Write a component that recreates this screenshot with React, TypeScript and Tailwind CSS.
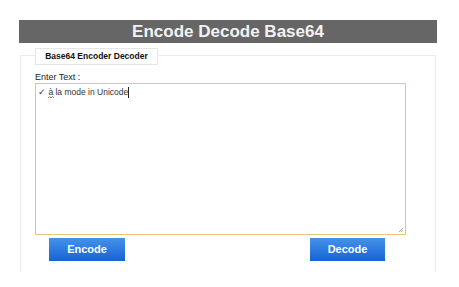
export default function App() {
  return (
    <div className="w-[459px] h-[287px] bg-white font-['Liberation_Sans',Arial,sans-serif] overflow-hidden">
      <div className="pt-[20px] pl-[19px] w-[437px]">
        {/* Title bar */}
        <div className="h-[23px] bg-[#666666] flex items-center justify-center text-[#f2f2f2] text-[17px] font-bold leading-none">
          Encode Decode Base64
        </div>

        {/* Panel */}
        <div className="relative mt-[12px] ml-[1px] w-[416px] h-[217px] border-t border-x border-[#ececec]">
          <div className="absolute left-[14px] top-[-8px] w-[123px] h-[17px] bg-white border border-[#e6e6e6] flex items-center justify-center text-[8.5px] font-bold text-[#111]">
            Base64 Encoder Decoder
          </div>

          <div className="pt-[16px] pl-[14px]">
            <div className="text-[9px] leading-[11px] text-[#222]">Enter Text :</div>
            <div className="w-[371px] h-[152px] border border-[#e7c57c] relative">
              <div className="relative pt-[3px] pl-[2px] text-[8.5px] leading-[11px] text-[#333] flex items-center">
                <span>✓&nbsp;</span>
                <span className="relative">
                  à
                  <svg className="absolute left-0 top-[9px]" width="6" height="3" viewBox="0 0 6 3">
                    <path d="M0 2 L1.5 0.5 L3 2 L4.5 0.5 L6 2" stroke="#e03030" strokeWidth="0.8" fill="none" />
                  </svg>
                </span>
                <span>&nbsp;la mode in Unicode</span>
                <span className="inline-block w-[1px] h-[11px] bg-[#222]" />
              </div>
              <svg className="absolute right-[1px] bottom-[1px]" width="6" height="6" viewBox="0 0 6 6">
                <path d="M1 5 L5 1 M3 5 L5 3" stroke="#999" strokeWidth="0.8" />
              </svg>
            </div>
            <div className="flex mt-[3px]">
              <button className="ml-[14px] w-[76px] h-[23px] bg-gradient-to-b from-[#4592ea] to-[#1762d6] text-white text-[11px] font-bold flex items-center justify-center">
                Encode
              </button>
              <button className="ml-[185px] w-[75px] h-[23px] bg-gradient-to-b from-[#4592ea] to-[#1762d6] text-white text-[11px] font-bold flex items-center justify-center">
                Decode
              </button>
            </div>
          </div>
        </div>
      </div>
    </div>
  );
}
